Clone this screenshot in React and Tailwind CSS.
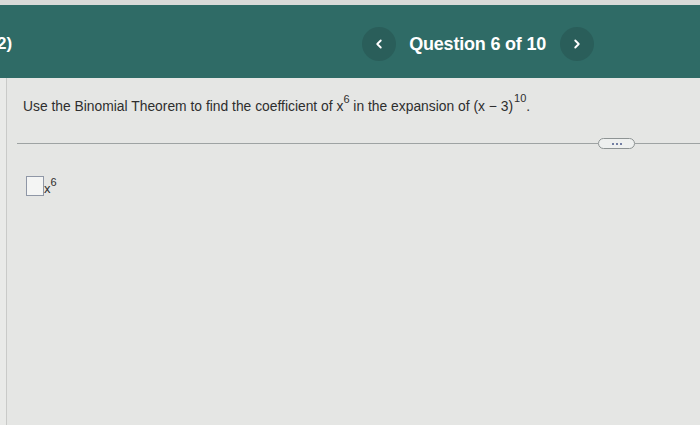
import { ChevronLeft, ChevronRight } from "lucide-react";

export default function App() {
  return (
    <div className="w-[700px] h-[425px] overflow-hidden bg-[#dcdddb] font-['Liberation_Sans',Arial,sans-serif] flex flex-col">
      <div className="h-[5px] bg-[#d9dad8]" />

      {/* Header bar */}
      <div className="h-[73px] pt-[5px] bg-[#2f6b66] flex items-center text-white">
        <span className="w-[14px] text-[17px] font-bold -ml-[3px]">2)</span>
        <div className="flex-1" />
        <div className="flex items-center mr-[106px]">
          <button className="w-[34px] h-[34px] rounded-full bg-[#2a5e5a] flex items-center justify-center">
            <ChevronLeft size={14} strokeWidth={3.2} />
          </button>
          <span className="ml-[13px] mr-[14px] text-[18px] font-bold tracking-[-0.2px]">
            Question 6 of 10
          </span>
          <button className="w-[34px] h-[34px] rounded-full bg-[#2a5e5a] flex items-center justify-center">
            <ChevronRight size={14} strokeWidth={3.2} />
          </button>
        </div>
      </div>

      {/* Body */}
      <div className="flex-1 flex bg-[#e5e6e4]">
        <div className="w-[7px] shrink-0 bg-[#e9eae8] border-r border-[#c9cac8]" />
        <div className="flex-1 flex flex-col">
          <p className="mt-[18px] ml-[16px] text-[13.85px] text-[#2e2e2e] leading-[20px]">
            Use the Binomial Theorem to find the coefficient of x
            <sup className="text-[11px] -top-[8px]">6</sup> in the expansion of (x − 3)
            <sup className="text-[11px] -top-[9px] ml-[1px]">10</sup>.
          </p>

          <div className="mt-[22px] ml-[10px] flex items-center">
            <div className="w-[581px] h-px bg-[#9ea3a3]" />
            <div className="w-[37px] h-[11px] rounded-full border border-[#8e9494] bg-[#eef0ef] flex items-center justify-center gap-[2px]">
              <span className="w-[2px] h-[2px] rounded-full bg-[#4a5a8a]" />
              <span className="w-[2px] h-[2px] rounded-full bg-[#4a5a8a]" />
              <span className="w-[2px] h-[2px] rounded-full bg-[#4a5a8a]" />
            </div>
            <div className="flex-1 h-px bg-[#9ea3a3]" />
          </div>

          <div className="mt-[27px] ml-[19px] flex items-end">
            <div className="w-[18px] h-[20px] border border-[#8f97a6] bg-[#f4f5f4]" />
            <span className="text-[13px] text-[#2e2e2e] leading-[14px]">x</span>
            <sup className="text-[11px] text-[#2e2e2e] -top-[14px]">6</sup>
          </div>
        </div>
      </div>
    </div>
  );
}
